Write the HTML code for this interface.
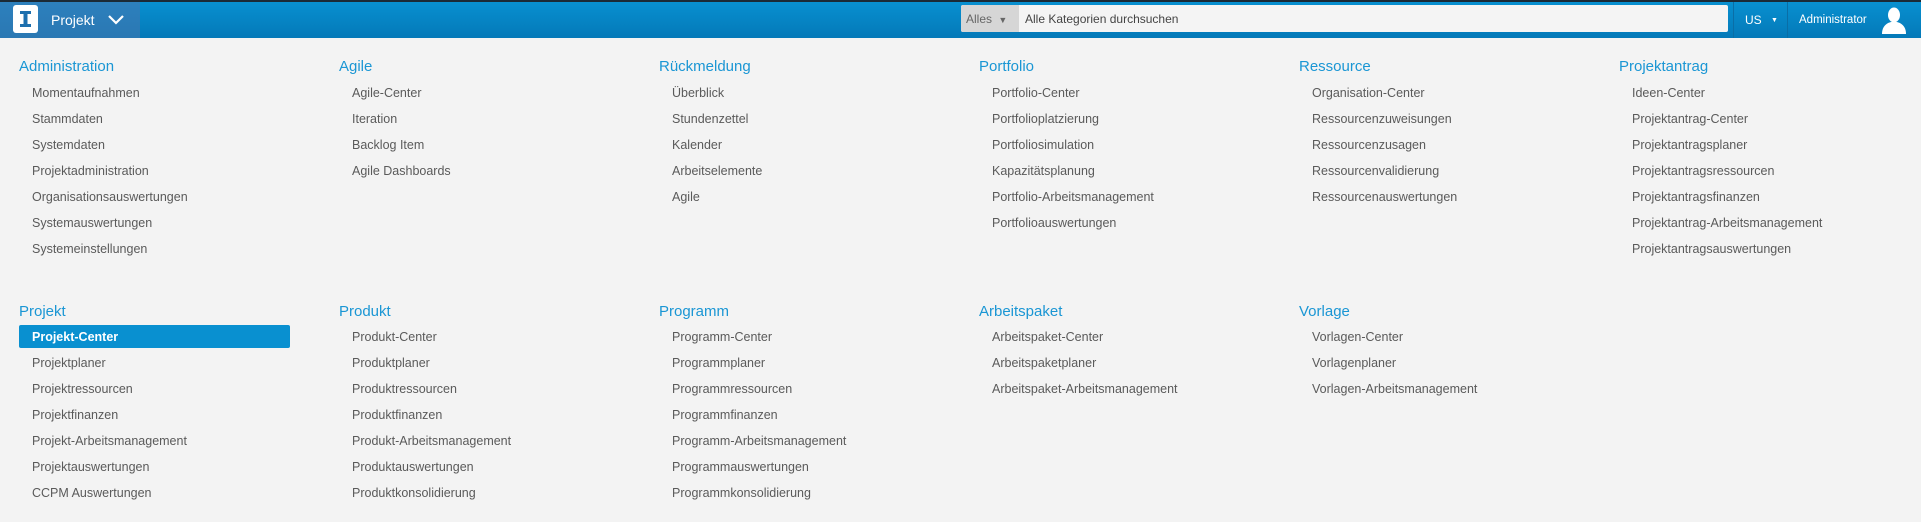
<!DOCTYPE html>
<html><head><meta charset="utf-8"><style>
*{margin:0;padding:0;box-sizing:border-box}
body{width:1921px;height:522px;background:#f3f3f3;font-family:"Liberation Sans",sans-serif;position:relative;overflow:hidden}
.hdr{position:absolute;left:0;top:0;width:1921px;height:38px;background:linear-gradient(#0890d0,#0479b8);border-top:2px solid #1b2a36}
.proj{position:absolute;left:0;top:0;width:140px;height:36px;background:linear-gradient(#2d80bd,#2a78b3)}
.logo{position:absolute;left:13px;top:3px;width:25px;height:28px;background:#fff;border-radius:3px}
.ptxt{position:absolute;left:51px;top:10px;color:#fff;font-size:14px}
.search{position:absolute;left:961px;top:3px;width:767px;height:27px;background:#f4f4f4;border-radius:2px;overflow:hidden}
.alles{position:absolute;left:0;top:0;width:58px;height:27px;background:#d6d6d6;color:#666;font-size:12px;padding:7px 0 0 5px}
.sph{position:absolute;left:64px;top:7px;font-size:12px;color:#444}
.us{position:absolute;left:1745px;top:11px;color:#fff;font-size:12px}
.sep{position:absolute;left:1787px;top:0;width:1px;height:36px;background:#0a6ea6}
.sep2{position:absolute;left:1733px;top:0;width:1px;height:36px;background:#0a6ea6}
.adm{position:absolute;left:1799px;top:12px;color:#fff;font-size:11.5px}
h3{position:absolute;font-weight:normal;color:#1a96d4;font-size:15px}
.it{position:absolute;font-size:12.5px;color:#5a5a5a}
.sel{position:absolute;left:19px;top:325px;width:271px;height:23px;background:#0990d0;border-radius:2px}
</style></head><body>
<div class="hdr"><div class="proj">
<div class="logo"><svg width="25" height="28" viewBox="0 0 25 28"><path d="M7 6h11v3h-3.5v10H18v3H7v-3h3.5V9H7z" fill="#1d6fae"/></svg></div>
<div class="ptxt">Projekt</div>
<svg style="position:absolute;left:108px;top:13px" width="16" height="10" viewBox="0 0 16 10"><path d="M1 1l7 7 7-7" stroke="#fff" stroke-width="2.2" fill="none"/></svg>
</div>
<div class="search"><div class="alles">Alles <span style="font-size:9px;margin-left:3px">▼</span></div><div class="sph">Alle Kategorien durchsuchen</div></div>
<div class="sep2"></div>
<div class="us">US <span style="font-size:7px;margin-left:6px;vertical-align:2px">▼</span></div>
<div class="sep"></div>
<div class="adm">Administrator</div>
<svg style="position:absolute;left:1880px;top:4px" width="28" height="28" viewBox="0 0 28 28"><ellipse cx="14" cy="9" rx="6" ry="7.5" fill="#fff"/><path d="M2 28c0-8 5-11 9-12h6c4 1 9 4 9 12z" fill="#fff"/></svg>
</div>
<div class="sel"></div>
<div id="c"></div>
<script>
var cols=[19,339,659,979,1299,1619];
var r1=[["Administration",["Momentaufnahmen","Stammdaten","Systemdaten","Projektadministration","Organisationsauswertungen","Systemauswertungen","Systemeinstellungen"]],
["Agile",["Agile-Center","Iteration","Backlog Item","Agile Dashboards"]],
["Rückmeldung",["Überblick","Stundenzettel","Kalender","Arbeitselemente","Agile"]],
["Portfolio",["Portfolio-Center","Portfolioplatzierung","Portfoliosimulation","Kapazitätsplanung","Portfolio-Arbeitsmanagement","Portfolioauswertungen"]],
["Ressource",["Organisation-Center","Ressourcenzuweisungen","Ressourcenzusagen","Ressourcenvalidierung","Ressourcenauswertungen"]],
["Projektantrag",["Ideen-Center","Projektantrag-Center","Projektantragsplaner","Projektantragsressourcen","Projektantragsfinanzen","Projektantrag-Arbeitsmanagement","Projektantragsauswertungen"]]];
var r2=[["Projekt",["Projekt-Center","Projektplaner","Projektressourcen","Projektfinanzen","Projekt-Arbeitsmanagement","Projektauswertungen","CCPM Auswertungen"]],
["Produkt",["Produkt-Center","Produktplaner","Produktressourcen","Produktfinanzen","Produkt-Arbeitsmanagement","Produktauswertungen","Produktkonsolidierung"]],
["Programm",["Programm-Center","Programmplaner","Programmressourcen","Programmfinanzen","Programm-Arbeitsmanagement","Programmauswertungen","Programmkonsolidierung"]],
["Arbeitspaket",["Arbeitspaket-Center","Arbeitspaketplaner","Arbeitspaket-Arbeitsmanagement"]],
["Vorlage",["Vorlagen-Center","Vorlagenplaner","Vorlagen-Arbeitsmanagement"]]];
var h="";
function row(r,ht,it){r.forEach(function(c,i){h+='<h3 style="left:'+cols[i]+'px;top:'+ht+'px">'+c[0]+'</h3>';
c[1].forEach(function(t,j){var s=(ht>200&&i==0&&j==0)?'color:#fff;font-weight:bold;':'';h+='<div class="it" style="'+s+'left:'+(cols[i]+13)+'px;top:'+(it+j*26)+'px">'+t+'</div>';});});}
row(r1,58,86);row(r2,303,330);
document.getElementById("c").innerHTML=h;
</script>
</body></html>
